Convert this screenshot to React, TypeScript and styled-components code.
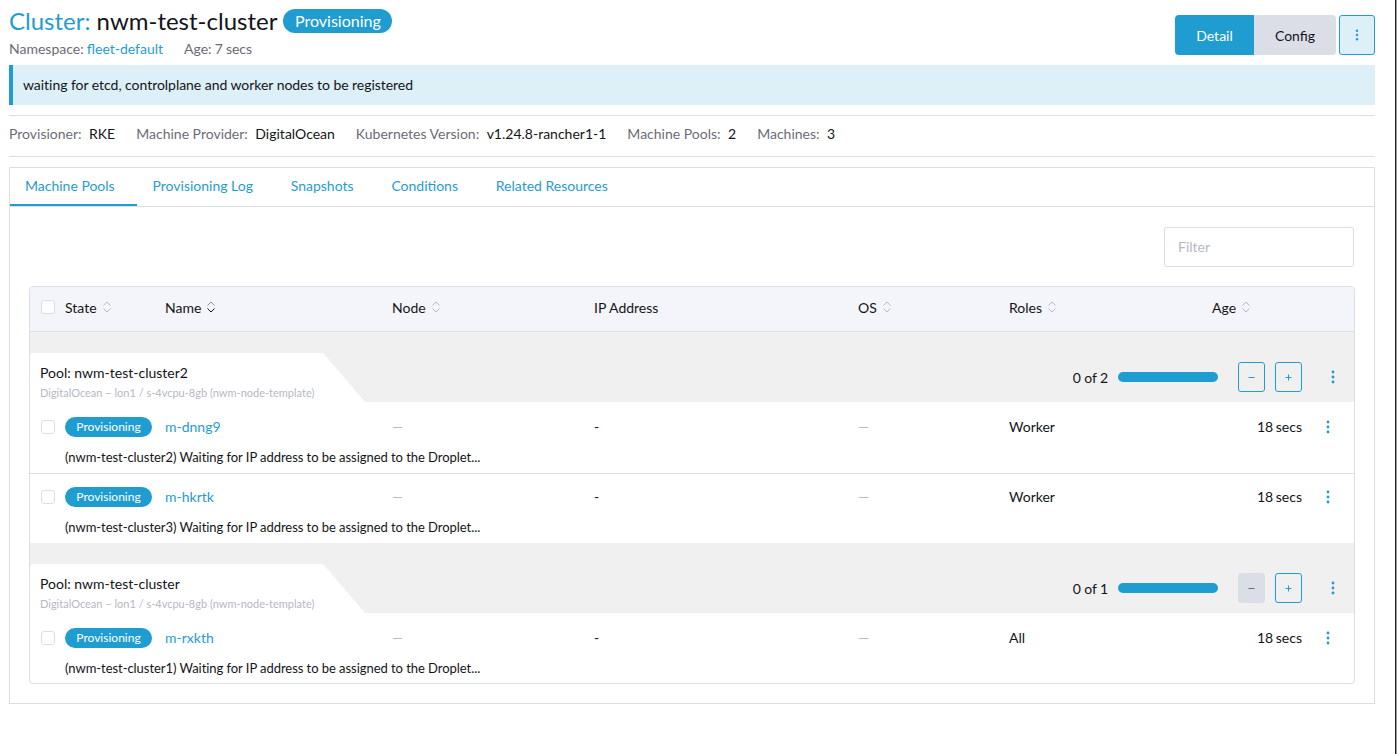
import styled, { createGlobalStyle } from "styled-components";

interface Machine {
  name: string;
  log: string;
  roles: string;
}

interface Pool {
  name: string;
  count: string;
  canScaleDown: boolean;
  machines: Machine[];
}

const pools: Pool[] = [
  {
    name: "nwm-test-cluster2",
    count: "0 of 2",
    canScaleDown: true,
    machines: [
      {
        name: "m-dnng9",
        log: "(nwm-test-cluster2) Waiting for IP address to be assigned to the Droplet...",
        roles: "Worker",
      },
      {
        name: "m-hkrtk",
        log: "(nwm-test-cluster3) Waiting for IP address to be assigned to the Droplet...",
        roles: "Worker",
      },
    ],
  },
  {
    name: "nwm-test-cluster",
    count: "0 of 1",
    canScaleDown: false,
    machines: [
      {
        name: "m-rxkth",
        log: "(nwm-test-cluster1) Waiting for IP address to be assigned to the Droplet...",
        roles: "All",
      },
    ],
  },
];

const GRID = "35px 100px 227px 202px 264px 151px 203px 90px 52px";

const GlobalStyle = createGlobalStyle`
  html, body {
    margin: 0;
    background: #fff;
    color: #141419;
    font-family: Lato, "Liberation Sans", sans-serif;
    font-size: 14px;
  }
`;

const Page = styled.div`
  width: 1397px;
  height: 754px;
  box-sizing: border-box;
  padding: 0 22px 0 9px;
  overflow: hidden;
  position: relative;
  &::after {
    content: "";
    position: absolute;
    top: 0;
    right: 0;
    bottom: 0;
    width: 2px;
    background: linear-gradient(90deg, #222 50%, #999 50%);
  }
`;

const Header = styled.header`
  display: flex;
  justify-content: space-between;
  height: 65px;
`;

const TitleBlock = styled.div`
  display: flex;
  flex-direction: column;
`;

const TitleRow = styled.div`
  display: flex;
  align-items: center;
  gap: 6px;
  height: 42px;
  padding-bottom: 1px;
  box-sizing: border-box;
`;

const Title = styled.h1`
  margin: 0;
  font-size: 24px;
  font-weight: 400;
  line-height: 30px;
  white-space: nowrap;
`;

const Accent = styled.span`
  color: #1f9dd1;
`;

const Pill = styled.span<{ $small?: boolean }>`
  display: inline-flex;
  align-items: center;
  justify-content: center;
  background: #1f9dd1;
  color: #fff;
  border-radius: 12px;
  white-space: nowrap;
  height: ${(p) => (p.$small ? "20px" : "24px")};
  width: ${(p) => (p.$small ? "87px" : "109px")};
  font-size: ${(p) => (p.$small ? "12px" : "16px")};
`;

const Meta = styled.div`
  display: flex;
  gap: 21px;
  color: #6c6c76;
  font-size: 14px;
  line-height: 14px;
  word-spacing: -0.5px;
`;

const LinkText = styled.a`
  color: #1f9dd1;
  text-decoration: none;
`;

const Actions = styled.div`
  display: flex;
  align-items: flex-start;
  gap: 3px;
  padding-top: 15px;
`;

const Segment = styled.button<{ $active?: boolean }>`
  width: ${(p) => (p.$active ? "79px" : "82px")};
  height: 40px;
  border: 0;
  padding: 0;
  font: inherit;
  background: ${(p) => (p.$active ? "#1f9dd1" : "#dcdee7")};
  color: ${(p) => (p.$active ? "#fff" : "#141419")};
  border-radius: ${(p) => (p.$active ? "4px 0 0 4px" : "0 4px 4px 0")};
`;

const SegmentGroup = styled.div`
  display: flex;
`;

const MenuButton = styled.button`
  width: 36px;
  height: 40px;
  box-sizing: border-box;
  display: flex;
  align-items: center;
  justify-content: center;
  padding: 0;
  border: 1px solid #1f9dd1;
  border-radius: 3px;
  background: #ddf0f8;
`;

const Banner = styled.div`
  height: 40px;
  box-sizing: border-box;
  display: flex;
  align-items: center;
  padding: 0 0 2px 10px;
  background: #ddf0f8;
  border-left: 4px solid #1f9dd1;
  letter-spacing: -0.04px;
`;

const InfoBar = styled.div`
  margin-top: 10px;
  height: 42px;
  box-sizing: border-box;
  display: flex;
  align-items: center;
  gap: 21px;
  padding-bottom: 6px;
  border-top: 1px solid #dcdee7;
  border-bottom: 1px solid #dcdee7;
`;

const InfoItem = styled.div`
  display: flex;
  gap: 7.5px;
`;

const InfoLabel = styled.span`
  color: #6c6c76;
`;

const TabBox = styled.section`
  margin-top: 10px;
  height: 537px;
  box-sizing: border-box;
  border: 1px solid #dcdee7;
`;

const TabList = styled.nav`
  display: flex;
  height: 38px;
  border-bottom: 1px solid #dcdee7;
`;

const TabItem = styled.a<{ $active?: boolean }>`
  height: 38px;
  box-sizing: border-box;
  padding: 0 22.8px 2px 15px;
  display: flex;
  align-items: center;
  color: #1f9dd1;
  border-bottom: 2px solid ${(p) => (p.$active ? "#1f9dd1" : "transparent")};
`;

const TabBody = styled.div`
  padding: 20px 19px 0 19px;
`;

const FilterRow = styled.div`
  display: flex;
  justify-content: flex-end;
  height: 59px;
  padding-right: 1px;
`;

const FilterInput = styled.input`
  width: 190px;
  height: 40px;
  box-sizing: border-box;
  padding: 0 13px 1px;
  border: 1px solid #dcdee7;
  border-radius: 3px;
  font: inherit;
  outline: none;
  &::placeholder {
    color: #b6b8c4;
  }
`;

const Table = styled.div`
  border: 1px solid #dcdee7;
  border-radius: 4px;
  overflow: hidden;
`;

const HeadRow = styled.div`
  display: grid;
  grid-template-columns: ${GRID};
  align-items: center;
  height: 45px;
  box-sizing: border-box;
  padding-bottom: 4px;
  background: #f4f5fa;
  border-bottom: 1px solid #dcdee7;
`;

const HeadCell = styled.div`
  display: flex;
  align-items: center;
  gap: 5px;
`;

const CheckCell = styled.div`
  padding-left: 11px;
  display: flex;
`;

const CheckBox = styled.span`
  width: 14px;
  height: 14px;
  box-sizing: border-box;
  background: #fff;
  border: 1px solid #dcdee7;
  border-radius: 3px;
`;

const GroupWrap = styled.div`
  background: #f0f0f1;
  padding-top: 21px;
`;

const GroupRow = styled.div`
  display: flex;
  align-items: center;
  justify-content: space-between;
  height: 49px;
`;

const PoolTab = styled.div`
  width: 335px;
  height: 49px;
  box-sizing: border-box;
  padding: 12px 0 0 10px;
  background: #fff;
  border-top-left-radius: 4px;
  clip-path: polygon(0 0, 293px 0, 100% 100%, 0 100%);
`;

const PoolName = styled.div`
  line-height: 16px;
`;

const PoolDetail = styled.div`
  margin-top: 5px;
  font-size: 11px;
  line-height: 13px;
  color: #b6b8c4;
  white-space: nowrap;
`;

const Scale = styled.div`
  display: flex;
  align-items: center;
  padding: 0 11px 1px 0;
`;

const Count = styled.span`
  margin-right: 10px;
  letter-spacing: -0.1px;
`;

const Bar = styled.div`
  width: 100px;
  height: 10px;
  border-radius: 5px;
  background: #1f9dd1;
  margin-right: 20px;
`;

const ScaleButton = styled.button<{ $disabled?: boolean }>`
  width: 27px;
  height: 30px;
  box-sizing: border-box;
  margin-right: 10px;
  padding: 0;
  display: flex;
  align-items: center;
  justify-content: center;
  border-radius: 3px;
  border: 1px solid ${(p) => (p.$disabled ? "#dcdee7" : "#1f9dd1")};
  background: ${(p) => (p.$disabled ? "#dcdee7" : "transparent")};
  color: ${(p) => (p.$disabled ? "#6c6c76" : "#1f9dd1")};
`;

const GroupMenu = styled.span`
  display: flex;
  width: 42px;
  justify-content: center;
  margin-right: -11px;
`;

const MachineGrid = styled.div`
  display: grid;
  grid-template-columns: ${GRID};
  align-items: center;
  height: 49px;
`;

const MachineRow = styled.div`
  display: flow-root;
  height: 70px;
  box-sizing: border-box;
  &:not(:last-child) {
    height: 72px;
    border-bottom: 1px solid #dcdee7;
  }
  & + & {
    height: 69px;
  }
  & + & ${MachineGrid} {
    margin-top: -2px;
  }
`;

const Muted = styled.span`
  color: #b9bac5;
`;

const AgeCell = styled.div`
  text-align: right;
  word-spacing: -1px;
`;

const RowMenu = styled.div`
  display: flex;
  justify-content: center;
`;

const LogLine = styled.div`
  margin-top: -2px;
  padding-left: 35px;
  font-size: 13px;
  line-height: 16px;
  letter-spacing: -0.05px;
`;

function Dots({ size = 14 }: { size?: number }) {
  return (
    <svg width={size} height={size} viewBox="0 0 14 14" fill="#1f9dd1">
      <circle cx="7" cy="2" r="1.4" />
      <circle cx="7" cy="7" r="1.4" />
      <circle cx="7" cy="12" r="1.4" />
    </svg>
  );
}

function SortIcon({ active }: { active?: boolean }) {
  const up = active ? "#8d8e99" : "#b6b8c4";
  const down = active ? "#141419" : "#b6b8c4";
  return (
    <svg width="10" height="14" viewBox="0 0 10 14" fill="none" strokeWidth="1">
      <path d="M1.5 5.5 L5 2 L8.5 5.5" stroke={up} />
      <path d="M1.5 8.5 L5 12 L8.5 8.5" stroke={down} />
    </svg>
  );
}

function PlusMinus({ plus }: { plus?: boolean }) {
  return (
    <svg width="9" height="9" viewBox="0 0 9 9" stroke="currentColor" strokeWidth="1">
      <path d="M1.5 4.5 H7.5" />
      {plus && <path d="M4.5 1.5 V7.5" />}
    </svg>
  );
}

function App() {
  return (
    <Page>
      <GlobalStyle />
      <Header>
        <TitleBlock>
          <TitleRow>
            <Title>
              <Accent>Cluster:</Accent> nwm-test-cluster
            </Title>
            <Pill>Provisioning</Pill>
          </TitleRow>
          <Meta>
            <span>
              Namespace: <LinkText>fleet-default</LinkText>
            </span>
            <span>Age: 7 secs</span>
          </Meta>
        </TitleBlock>
        <Actions>
          <SegmentGroup>
            <Segment $active>Detail</Segment>
            <Segment>Config</Segment>
          </SegmentGroup>
          <MenuButton>
            <Dots size={12} />
          </MenuButton>
        </Actions>
      </Header>

      <Banner>waiting for etcd, controlplane and worker nodes to be registered</Banner>

      <InfoBar>
        <InfoItem>
          <InfoLabel>Provisioner:</InfoLabel> RKE
        </InfoItem>
        <InfoItem>
          <InfoLabel>Machine Provider:</InfoLabel> DigitalOcean
        </InfoItem>
        <InfoItem>
          <InfoLabel>Kubernetes Version:</InfoLabel> v1.24.8-rancher1-1
        </InfoItem>
        <InfoItem>
          <InfoLabel>Machine Pools:</InfoLabel> 2
        </InfoItem>
        <InfoItem>
          <InfoLabel>Machines:</InfoLabel> 3
        </InfoItem>
      </InfoBar>

      <TabBox>
        <TabList>
          <TabItem $active>Machine Pools</TabItem>
          <TabItem>Provisioning Log</TabItem>
          <TabItem>Snapshots</TabItem>
          <TabItem>Conditions</TabItem>
          <TabItem>Related Resources</TabItem>
        </TabList>
        <TabBody>
          <FilterRow>
            <FilterInput placeholder="Filter" />
          </FilterRow>
          <Table>
            <HeadRow>
              <CheckCell>
                <CheckBox />
              </CheckCell>
              <HeadCell>
                State <SortIcon />
              </HeadCell>
              <HeadCell>
                Name <SortIcon active />
              </HeadCell>
              <HeadCell>
                Node <SortIcon />
              </HeadCell>
              <HeadCell>IP Address</HeadCell>
              <HeadCell>
                OS <SortIcon />
              </HeadCell>
              <HeadCell>
                Roles <SortIcon />
              </HeadCell>
              <HeadCell>
                Age <SortIcon />
              </HeadCell>
              <div />
            </HeadRow>
            {pools.map((pool) => (
              <div key={pool.name}>
                <GroupWrap>
                  <GroupRow>
                    <PoolTab>
                      <PoolName>Pool: {pool.name}</PoolName>
                      <PoolDetail>
                        DigitalOcean – lon1 / s-4vcpu-8gb (nwm-node-template)
                      </PoolDetail>
                    </PoolTab>
                    <Scale>
                      <Count>{pool.count}</Count>
                      <Bar />
                      <ScaleButton $disabled={!pool.canScaleDown}>
                        <PlusMinus />
                      </ScaleButton>
                      <ScaleButton>
                        <PlusMinus plus />
                      </ScaleButton>
                      <GroupMenu>
                        <Dots />
                      </GroupMenu>
                    </Scale>
                  </GroupRow>
                </GroupWrap>
                {pool.machines.map((machine) => (
                  <MachineRow key={machine.name}>
                    <MachineGrid>
                      <CheckCell>
                        <CheckBox />
                      </CheckCell>
                      <div>
                        <Pill $small>Provisioning</Pill>
                      </div>
                      <LinkText>{machine.name}</LinkText>
                      <Muted>—</Muted>
                      <div>-</div>
                      <Muted>—</Muted>
                      <div>{machine.roles}</div>
                      <AgeCell>18 secs</AgeCell>
                      <RowMenu>
                        <Dots />
                      </RowMenu>
                    </MachineGrid>
                    <LogLine>{machine.log}</LogLine>
                  </MachineRow>
                ))}
              </div>
            ))}
          </Table>
        </TabBody>
      </TabBox>
    </Page>
  );
}

export default App;
